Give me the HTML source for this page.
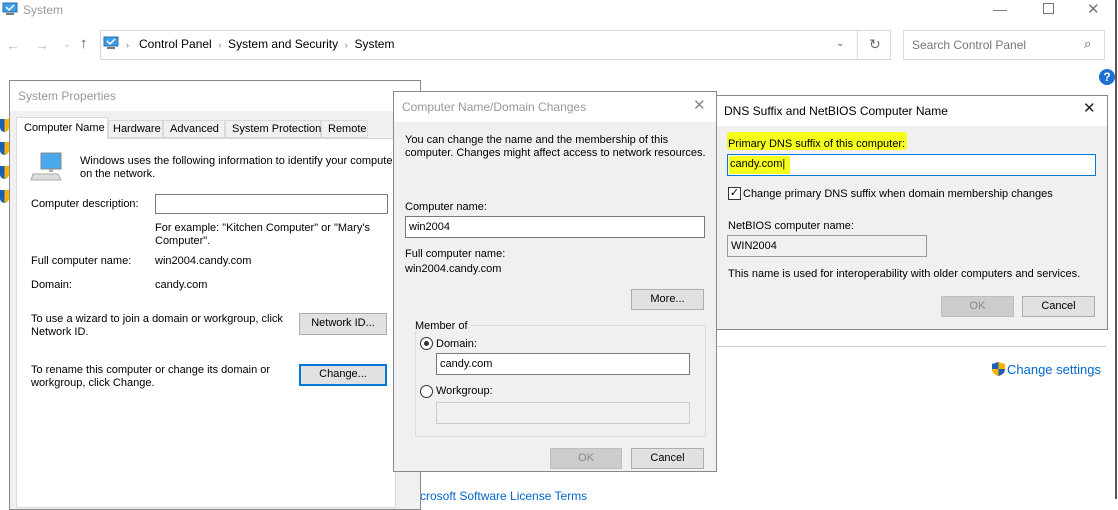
<!DOCTYPE html>
<html><head><meta charset="utf-8"><style>
*{margin:0;padding:0;box-sizing:border-box}
body{width:1118px;height:499px;overflow:hidden;background:#fff;font-family:"Liberation Sans",sans-serif;font-size:11px;color:#000;position:relative}
.a{position:absolute;white-space:nowrap}
.btn{position:absolute;background:#e1e1e1;border:1px solid #adadad;text-align:center;line-height:19px;font-size:11px}
.inp{position:absolute;background:#fff;border:1px solid #7a7a7a;padding-left:3px;line-height:18px;font-size:11px}
.sh{position:absolute;left:0;width:9px;height:13px;background:linear-gradient(90deg,#1c5fb8 50%,#f4b400 50%);border-radius:0 0 5px 5px}
</style></head><body>
<!-- top window -->
<svg class="a" style="left:2px;top:2px" width="16" height="14"><rect x="1" y="1" width="14" height="9" fill="#3b9de6" stroke="#2a6cb0"/><path d="M4 5l3 3 5-5" stroke="#fff" stroke-width="1.5" fill="none"/><rect x="4" y="11" width="8" height="2" fill="#777"/></svg>
<div class="a" style="left:23px;top:3px;font-size:12px;color:#999">System</div>
<div class="a" style="left:993px;top:1px;color:#777;font-size:14px">—</div>
<div class="a" style="left:1043px;top:3px;width:11px;height:11px;border:1px solid #777"></div>
<div class="a" style="left:1087px;top:0px;color:#777;font-size:15px">✕</div>
<div class="a" style="left:6px;top:37px;color:#bbb;font-size:14px">←</div>
<div class="a" style="left:35px;top:37px;color:#bbb;font-size:14px">→</div>
<div class="a" style="left:63px;top:39px;color:#bbb;font-size:9px">⌄</div>
<div class="a" style="left:80px;top:35px;color:#555;font-size:15px">↑</div>
<div class="a" style="left:100px;top:30px;width:758px;height:30px;border:1px solid #d9d9d9"></div>
<div class="a" style="left:857px;top:30px;width:34px;height:30px;border:1px solid #d9d9d9"></div>
<svg class="a" style="left:103px;top:36px" width="16" height="14"><rect x="1" y="1" width="14" height="9" fill="#3b9de6" stroke="#2a6cb0"/><path d="M4 5l3 3 5-5" stroke="#fff" stroke-width="1.5" fill="none"/><rect x="4" y="11" width="8" height="2" fill="#777"/></svg>
<div class="a" style="left:126px;top:37px;font-size:12px;color:#000"><span style="color:#777;font-size:9px">›</span>&nbsp;&nbsp; Control Panel &nbsp;<span style="color:#777;font-size:9px">›</span>&nbsp; System and Security &nbsp;<span style="color:#777;font-size:9px">›</span>&nbsp; System</div>
<div class="a" style="left:836px;top:38px;color:#666;font-size:10px">⌄</div>
<div class="a" style="left:869px;top:36px;color:#666;font-size:14px">↻</div>
<div class="a" style="left:903px;top:30px;width:202px;height:30px;border:1px solid #d9d9d9"></div>
<div class="a" style="left:912px;top:38px;color:#777;font-size:12px">Search Control Panel</div>
<div class="a" style="left:1084px;top:36px;color:#555;font-size:13px">⌕</div>
<div class="a" style="left:1099px;top:69px;width:16px;height:16px;border-radius:50%;background:#1e6fd0;color:#fff;font-weight:bold;text-align:center;line-height:16px;font-size:12px">?</div>
<div class="a" style="left:1115px;top:0;width:2px;height:499px;background:#555"></div>
<div class="a" style="left:716px;top:346px;width:390px;height:1px;background:#ccc"></div>
<div class="a" style="left:410px;top:460px;width:1px;height:39px;background:#ccc"></div>
<svg class="a" style="left:991px;top:361px" width="15" height="16"><path d="M7.5 1L1 3v5c0 4 3 6 6.5 7 3.5-1 6.5-3 6.5-7V3z" fill="#f4b400"/><path d="M7.5 1L1 3v5h6.5zM7.5 8v7c3.5-1 6.5-3 6.5-7z" fill="#1c5fb8"/></svg>
<div class="a" style="left:1007px;top:362px;color:#0066cc;font-size:13px">Change settings</div>
<div class="a" style="left:420px;top:489px;color:#0066cc;font-size:12px">crosoft Software License Terms</div>

<!-- shields -->
<div class="sh" style="top:119px"></div><div class="sh" style="top:142px"></div><div class="sh" style="top:166px"></div><div class="sh" style="top:190px"></div>

<!-- System Properties -->
<div class="a" style="left:9px;top:80px;width:412px;height:430px;border:1px solid #888;background:#f0f0f0"></div>
<div class="a" style="left:10px;top:81px;width:410px;height:30px;background:#fff"></div>
<div class="a" style="left:18px;top:89px;color:#999;font-size:12px">System Properties</div>
<div class="a" style="left:16px;top:138px;width:380px;height:370px;background:#fff;border:1px solid #d9d9d9"></div>
<div class="a" style="left:16px;top:117px;width:92px;height:22px;background:#fff;border:1px solid #d9d9d9;border-bottom:none;padding:4px 0 0 7px">Computer Name</div>
<div class="a" style="left:108px;top:120px;width:55px;height:18px;border:1px solid #d9d9d9;padding:2px 0 0 4px">Hardware</div>
<div class="a" style="left:163px;top:120px;width:62px;height:18px;border:1px solid #d9d9d9;padding:2px 0 0 6px">Advanced</div>
<div class="a" style="left:225px;top:120px;width:96px;height:18px;border:1px solid #d9d9d9;padding:2px 0 0 6px">System Protection</div>
<div class="a" style="left:321px;top:120px;width:47px;height:18px;border:1px solid #d9d9d9;padding:2px 0 0 6px">Remote</div>
<svg class="a" style="left:30px;top:152px" width="34" height="30"><rect x="11" y="1" width="20" height="16" fill="#4aa8ec" stroke="#888"/><rect x="19" y="17" width="4" height="3" fill="#aaa"/><path d="M3 22l25 0 3 6H1z" fill="#ddd" stroke="#aaa"/></svg>
<div class="a" style="left:80px;top:155px;line-height:13px">Windows uses the following information to identify your computer<br>on the network.</div>
<div class="a" style="left:31px;top:198px">Computer description:</div>
<div class="inp" style="left:155px;top:194px;width:233px;height:20px"></div>
<div class="a" style="left:155px;top:222px;line-height:13px">For example: "Kitchen Computer" or "Mary's<br>Computer".</div>
<div class="a" style="left:31px;top:255px">Full computer name:</div>
<div class="a" style="left:155px;top:255px">win2004.candy.com</div>
<div class="a" style="left:31px;top:279px">Domain:</div>
<div class="a" style="left:155px;top:279px">candy.com</div>
<div class="a" style="left:31px;top:313px;line-height:13px">To use a wizard to join a domain or workgroup, click<br>Network ID.</div>
<div class="btn" style="left:299px;top:313px;width:88px;height:22px">Network ID...</div>
<div class="a" style="left:31px;top:364px;line-height:13px">To rename this computer or change its domain or<br>workgroup, click Change.</div>
<div class="btn" style="left:299px;top:364px;width:88px;height:22px;border:2px solid #0078d7;line-height:17px">Change...</div>

<!-- Computer Name/Domain Changes -->
<div class="a" style="left:393px;top:91px;width:324px;height:381px;border:1px solid #888;background:#f0f0f0"></div>
<div class="a" style="left:394px;top:92px;width:322px;height:30px;background:#fff"></div>
<div class="a" style="left:402px;top:100px;color:#999;font-size:12px">Computer Name/Domain Changes</div>
<div class="a" style="left:693px;top:96px;color:#888;font-size:15px">✕</div>
<div class="a" style="left:405px;top:134px;line-height:13px">You can change the name and the membership of this<br>computer. Changes might affect access to network resources.</div>
<div class="a" style="left:405px;top:201px">Computer name:</div>
<div class="inp" style="left:405px;top:216px;width:300px;height:22px;line-height:20px">win2004</div>
<div class="a" style="left:405px;top:248px">Full computer name:</div>
<div class="a" style="left:405px;top:263px">win2004.candy.com</div>
<div class="btn" style="left:631px;top:289px;width:73px;height:21px">More...</div>
<div class="a" style="left:415px;top:325px;width:291px;height:112px;border:1px solid #dcdcdc"></div>
<div class="a" style="left:412px;top:320px;background:#f0f0f0;padding:0 3px">Member of</div>
<div class="a" style="left:420px;top:337px;width:13px;height:13px;border:1px solid #333;border-radius:50%;background:#fff"></div>
<div class="a" style="left:424px;top:341px;width:5px;height:5px;border-radius:50%;background:#333"></div>
<div class="a" style="left:436px;top:338px">Domain:</div>
<div class="inp" style="left:436px;top:353px;width:254px;height:22px;line-height:20px">candy.com</div>
<div class="a" style="left:420px;top:385px;width:13px;height:13px;border:1px solid #333;border-radius:50%;background:#fff"></div>
<div class="a" style="left:436px;top:385px">Workgroup:</div>
<div class="a" style="left:436px;top:402px;width:254px;height:22px;border:1px solid #ccc;background:#f0f0f0"></div>
<div class="btn" style="left:550px;top:448px;width:72px;height:21px;background:#ccc;border-color:#bfbfbf;color:#888">OK</div>
<div class="btn" style="left:631px;top:448px;width:73px;height:21px">Cancel</div>

<!-- DNS Suffix -->
<div class="a" style="left:716px;top:95px;width:392px;height:235px;border:1px solid #888;background:#f0f0f0"></div>
<div class="a" style="left:717px;top:96px;width:390px;height:30px;background:#fff"></div>
<div class="a" style="left:724px;top:104px;font-size:12px">DNS Suffix and NetBIOS Computer Name</div>
<div class="a" style="left:1083px;top:99px;font-size:15px;color:#222">✕</div>
<div class="a" style="left:727px;top:132px;width:180px;height:18px;background:#f5ff1a;border-radius:3px"></div>
<div class="a" style="left:728px;top:138px">Primary DNS suffix of this computer:</div>
<div class="inp" style="left:727px;top:154px;width:369px;height:22px;border-color:#0078d7;line-height:20px"></div>
<div class="a" style="left:729px;top:156px;width:61px;height:18px;background:#f5ff1a"></div>
<div class="a" style="left:730px;top:158px">candy.com|</div>
<div class="a" style="left:728px;top:187px;width:13px;height:13px;border:1px solid #333;background:#fff;font-size:11px;line-height:11px;text-align:center">✓</div>
<div class="a" style="left:743px;top:188px">Change primary DNS suffix when domain membership changes</div>
<div class="a" style="left:728px;top:220px">NetBIOS computer name:</div>
<div class="a" style="left:727px;top:235px;width:200px;height:22px;border:1px solid #999;padding-left:3px;line-height:20px">WIN2004</div>
<div class="a" style="left:728px;top:268px">This name is used for interoperability with older computers and services.</div>
<div class="btn" style="left:941px;top:296px;width:73px;height:21px;background:#ccc;border-color:#bfbfbf;color:#888">OK</div>
<div class="btn" style="left:1022px;top:296px;width:73px;height:21px">Cancel</div>
</body></html>
